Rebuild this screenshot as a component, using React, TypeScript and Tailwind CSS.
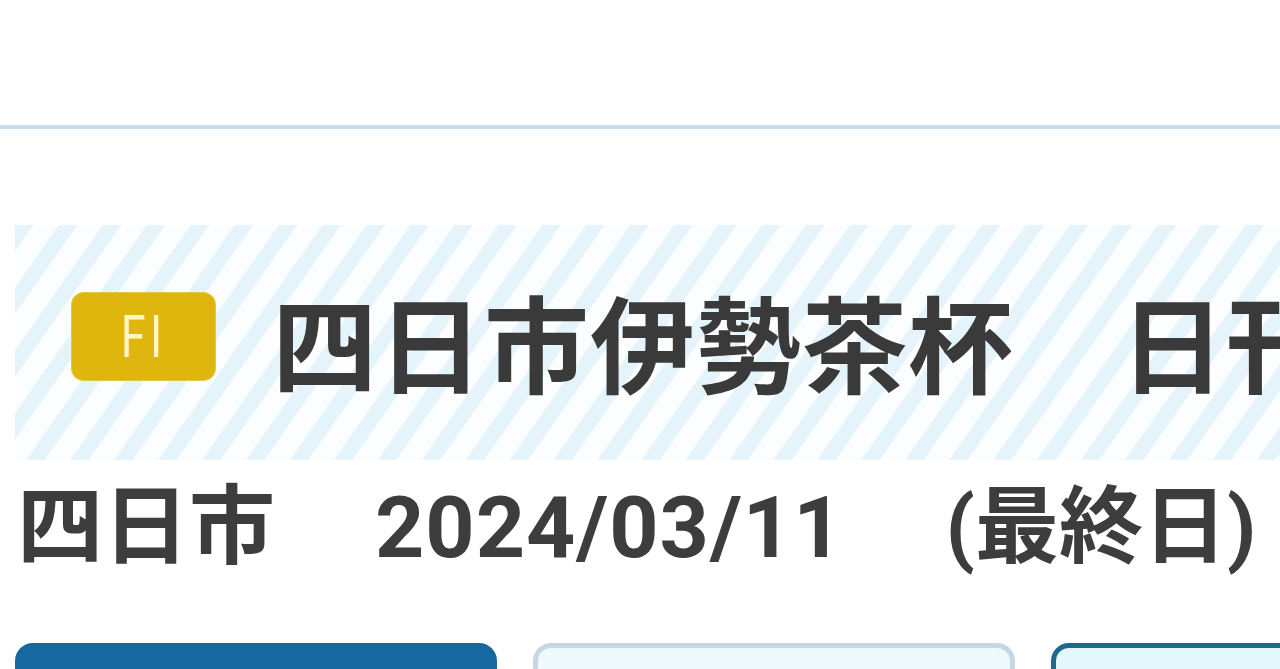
import React from "react";

const jp = { fontFamily: 'Roboto, "Noto Sans CJK JP", "Noto Sans", sans-serif' };

function GradeBadge({ grade }: { grade: string }) {
  return (
    <div className="mt-[68px] flex h-[87px] w-[143px] shrink-0 items-center justify-center rounded-[12px] bg-[#dfb60e] shadow-[0_0_0_1px_#e6c448]">
      <span className="scale-x-75 text-[60px] font-normal leading-none tracking-[0.1em] text-[#fff6c6]" style={jp}>
        {grade}
      </span>
    </div>
  );
}

export default function App() {
  return (
    <div className="h-[669px] w-full overflow-hidden bg-white text-[#3b3b3b]" style={jp}>
      {/* header area */}
      <div className="h-[125px] bg-white" />
      <div className="h-[4px] bg-[#c8dae5]" />
      <div className="h-[96px]" />

      {/* race title banner */}
      <div className="ml-[15px] flex h-[235px] items-start overflow-hidden bg-[repeating-linear-gradient(125deg,#e5f3fb_0px,#e5f3fb_15px,#fbfdfe_15px,#fbfdfe_36px)] pl-[57px]">
        <GradeBadge grade="FI" />
        <h1 className="ml-[57px] mt-[72px] whitespace-nowrap text-[105px] font-bold leading-none tracking-[1px] text-[#3a3a3a]">
          四日市伊勢茶杯　日刊
        </h1>
      </div>

      {/* venue / date */}
      <div className="flex h-[136px] items-center whitespace-nowrap pl-[17px] text-[86px] font-bold leading-none text-[#3d3d3d]">
        <span>四日市</span>
        <span className="ml-[100px] tracking-[1px]">2024/03/11</span>
        <span className="ml-[102px] text-[84px]">(最終日)</span>
      </div>

      {/* tabs */}
      <div className="mt-[47px] flex gap-[36px] pl-[15px]">
        <div className="h-[100px] w-[482px] shrink-0 rounded-[18px] bg-[#16689f]" />
        <div className="h-[100px] w-[482px] shrink-0 rounded-[18px] border-[5px] border-[#c6d7e2] bg-[#eefafd]" />
        <div className="h-[100px] w-[482px] shrink-0 rounded-[18px] border-[5px] border-[#1d6a8f] bg-[#e4f8fc]" />
      </div>
    </div>
  );
}
